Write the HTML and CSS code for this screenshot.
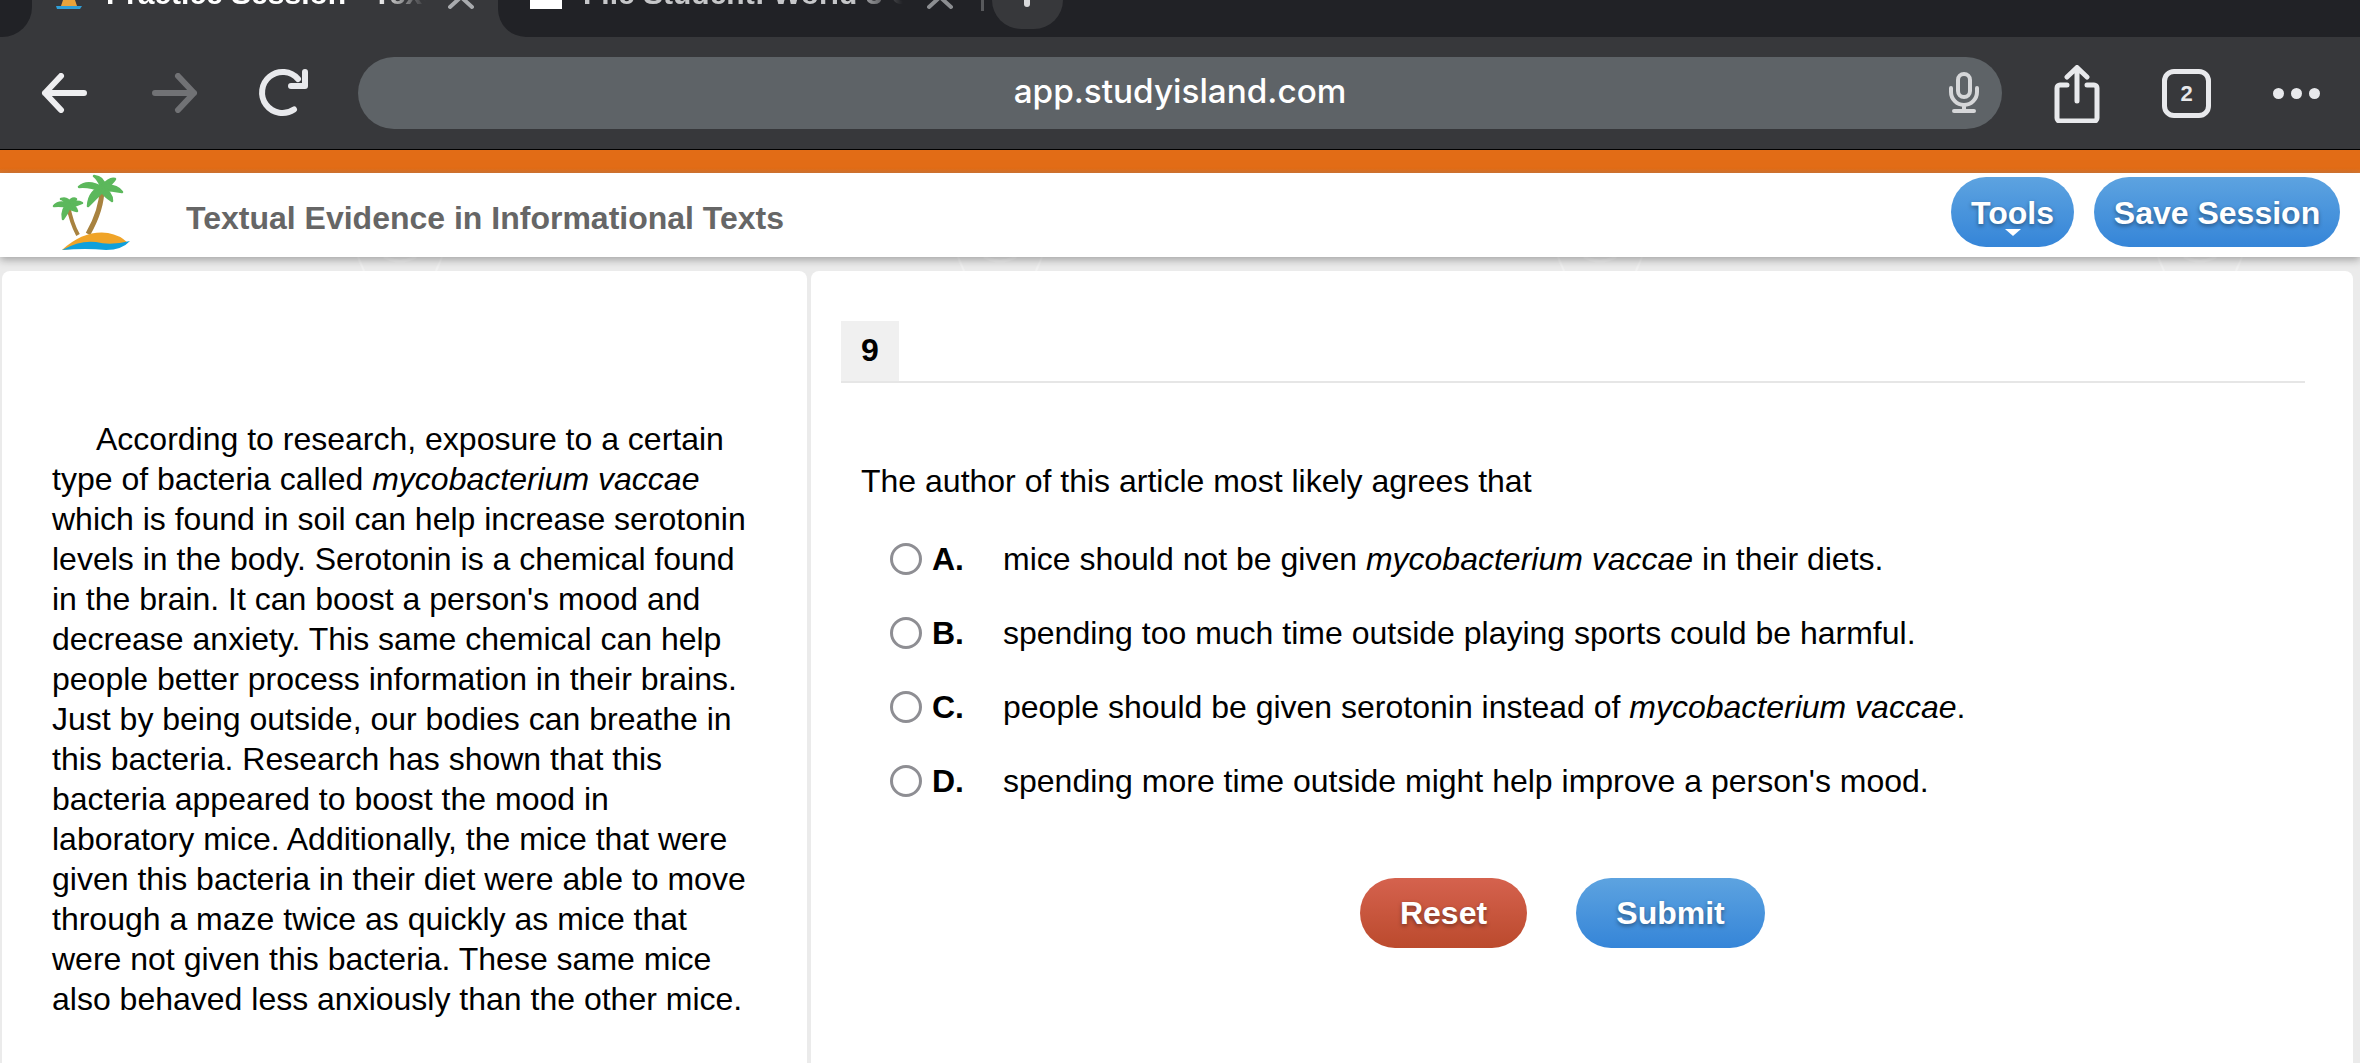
FILE: index.html
```html
<!DOCTYPE html>
<html lang="en">
<head>
    <meta charset="UTF-8">
    <title>Practice Session - Textual Evidence</title>
    <link rel="stylesheet" href="styles.css">
</head>
<body>
    <!-- Browser chrome -->
    <div class="tab-strip">
        <div class="tab-edge"></div>
        <div class="tab tab-active">
            <svg class="tab-icon" width="26" height="9" viewBox="0 0 26 9"><path d="M7 0h12l2 6H5z" fill="#e8a33a"/><path d="M0 6h26l-2 3H1z" fill="#2f9fd8"/></svg>
            <span class="tab-title">Practice Session - Textual Evidence</span>
            <svg class="tab-close" width="26" height="10" viewBox="0 0 26 10"><path d="M13 -3L2 7M13 -3L24 7" stroke="#a9abae" stroke-width="4" stroke-linecap="round" fill="none"/></svg>
        </div>
        <div class="tab tab-other">
            <span class="tab-square"></span>
            <span class="tab-title tab-title-dim">File Student: World 3 Group</span>
            <svg class="tab-close tab-close-other" width="26" height="10" viewBox="0 0 26 10"><path d="M13 -3L2 7M13 -3L24 7" stroke="#8c8e91" stroke-width="4" stroke-linecap="round" fill="none"/></svg>
            <span class="tab-sep"></span>
            <span class="tab-new"><span class="tab-plus"></span></span>
        </div>
    </div>

    <div class="toolbar">
        <svg class="tool-icon" width="46" height="40" viewBox="0 0 46 40"><path d="M20 3L4 20L20 37M4 20H43" stroke="#eeeef0" stroke-width="6" stroke-linecap="round" stroke-linejoin="round" fill="none"/></svg>
        <svg class="tool-icon tool-forward" width="46" height="40" viewBox="0 0 46 40"><path d="M26 3L42 20L26 37M42 20H3" stroke="#717275" stroke-width="6" stroke-linecap="round" stroke-linejoin="round" fill="none"/></svg>
        <svg class="tool-icon tool-reload" width="52" height="52" viewBox="0 0 52 52"><path d="M36 42.500A20.500 20.500 0 1 1 40 12" stroke="#e8e9ec" stroke-width="6" stroke-linecap="round" fill="none"/><path d="M47 5V19H33" stroke="#e8e9ec" stroke-width="6" stroke-linecap="round" stroke-linejoin="round" fill="none"/></svg>
        <div class="url-bar">
            <span class="url-text">app.studyisland.com</span>
            <svg class="url-mic" width="32" height="42" viewBox="0 0 32 42"><rect x="10" y="2" width="12" height="23" rx="6" fill="none" stroke="#d6d7d9" stroke-width="4"/><path d="M3 16v4a13 13 0 0 0 26 0v-4M16 33v6M6 39h20" fill="none" stroke="#d6d7d9" stroke-width="4" stroke-linecap="round"/></svg>
        </div>
        <svg class="tool-icon tool-share" width="46" height="58" viewBox="0 0 46 58"><path d="M13 20H6a3 3 0 0 0-3 3v30a3 3 0 0 0 3 3h34a3 3 0 0 0 3-3V23a3 3 0 0 0-3-3h-7" stroke="#e8e9ec" stroke-width="5" fill="none" stroke-linecap="round"/><path d="M23 36V3M13 12L23 2.500L33 12" stroke="#e8e9ec" stroke-width="5" fill="none" stroke-linecap="round" stroke-linejoin="round"/></svg>
        <div class="tab-count">2</div>
        <div class="more-dots"><span></span><span></span><span></span></div>
    </div>
    <div class="orange-bar"></div>

    <!-- App header -->
    <div class="app-header">
        <svg class="logo" width="84" height="78" viewBox="0 0 84 78">
            <path d="M52 14C52 30 46 46 38 60" stroke="#a8823f" stroke-width="5" fill="none"/>
            <path d="M18 31C20 42 23 52 28 61" stroke="#a8823f" stroke-width="4" fill="none"/>
            <g fill="#5cb85c" stroke="#5cb85c" stroke-width="2.500" stroke-linejoin="round">
                <path d="M52 14Q48 5 44 2Q54 3 55 13Z"/>
                <path d="M52 12Q60 3 65 5Q62 10 53 16Z"/>
                <path d="M52 12Q66 10 72 18Q62 16 52 16Z"/>
                <path d="M52 13Q62 18 62 27Q54 22 51 16Z"/>
                <path d="M53 14Q38 5 29 13Q40 12 51 17Z"/>
                <path d="M53 13Q39 16 38 32Q46 24 54 16Z"/>
                <path d="M18 31Q13 25 11 25Q18 23 20 30Z"/>
                <path d="M17 30Q22 23 26 25Q24 30 19 32Z"/>
                <path d="M17 30Q27 26 32 29Q26 32 18 33Z"/>
                <path d="M18 30Q26 32 27 37Q21 36 17 32Z"/>
                <path d="M19 30Q9 26 4 32Q10 31 18 33Z"/>
                <path d="M19 30Q11 34 13 45Q17 40 20 32Z"/>
            </g>
            <path d="M12 76Q34 56 58 59Q70 61 78 69L12 76Z" fill="#f0a428"/>
            <path d="M12 76Q30 66 46 68Q60 72 80 67Q72 76 56 76Q36 74 12 76Z" fill="#0fa0dc"/>
        </svg>
        <h1 class="app-title">Textual Evidence in Informational Texts</h1>
        <div class="header-buttons">
            <button class="btn btn-blue btn-tools">Tools<span class="caret"></span></button>
            <button class="btn btn-blue btn-save">Save Session</button>
        </div>
    </div>

    <!-- Main panels -->
    <div class="content">
        <div class="passage">
            <p>According to research, exposure to a certain type of bacteria called <em>mycobacterium vaccae</em> which is found in soil can help increase serotonin levels in the body. Serotonin is a chemical found in the brain. It can boost a person's mood and decrease anxiety. This same chemical can help people better process information in their brains. Just by being outside, our bodies can breathe in this bacteria. Research has shown that this bacteria appeared to boost the mood in laboratory mice. Additionally, the mice that were given this bacteria in their diet were able to move through a maze twice as quickly as mice that were not given this bacteria. These same mice also behaved less anxiously than the other mice.</p>
        </div>
        <div class="question">
            <div class="question-head"><span class="question-number">9</span></div>
            <p class="question-text">The author of this article most likely agrees that</p>
            <div class="choices">
                <div class="choice"><span class="radio"></span><b class="letter">A.</b><span>mice should not be given <em>mycobacterium vaccae</em> in their diets.</span></div>
                <div class="choice"><span class="radio"></span><b class="letter">B.</b><span>spending too much time outside playing sports could be harmful.</span></div>
                <div class="choice"><span class="radio"></span><b class="letter">C.</b><span>people should be given serotonin instead of <em>mycobacterium vaccae</em>.</span></div>
                <div class="choice"><span class="radio"></span><b class="letter">D.</b><span>spending more time outside might help improve a person's mood.</span></div>
            </div>
            <div class="actions">
                <button class="btn btn-red btn-reset">Reset</button>
                <button class="btn btn-blue btn-submit">Submit</button>
            </div>
        </div>
    </div>
</body>
</html>
```
FILE: styles.css
```css
html, body {
    margin: 0;
    height: 1063px;
    overflow: hidden;
}

body {
    font-family: "Liberation Sans", Arial, sans-serif;
    background-color: #ebebeb;
    /* faint palm pattern of the page background, shows only in the strip under the header */
    background-image: url("data:image/svg+xml,%3Csvg xmlns='http://www.w3.org/2000/svg' width='600' height='14'%3E%3Cpath d='M358 0l6 14M442 0l-6 14' stroke='%23f1f1f1' stroke-width='2' fill='none'/%3E%3Cpath d='M384 0q16 8 32 0' stroke='%23f1f1f1' stroke-width='3' fill='none'/%3E%3C/svg%3E");
    background-repeat: repeat-x;
    background-position: 0 257px;
    color: #000;
}

/* Browser chrome */
.tab-strip {
    display: flex;
    height: 37px;
    background: #37383b;
    overflow: hidden;
}

.tab-edge {
    width: 32px;
    background: #212226;
    border-bottom-right-radius: 30px;
}

.tab {
    display: flex;
    align-items: flex-start;
    height: 37px;
    color: #fff;
    font-size: 30px;
    font-weight: bold;
    box-sizing: border-box;
}

.tab-active {
    width: 466px;
    padding-left: 24px;
}

.tab-other {
    flex: 1;
    background: #212226;
    border-bottom-left-radius: 28px;
    padding-left: 32px;
}

.tab-icon {
    flex: none;
    margin-right: 24px;
}

.tab-title {
    display: block;
    flex: none;
    width: 320px;
    line-height: 34px;
    margin-top: -23px;
    white-space: nowrap;
    overflow: hidden;
    -webkit-mask-image: linear-gradient(to right, #000 84%, transparent);
    mask-image: linear-gradient(to right, #000 84%, transparent);
}

.tab-title-dim {
    color: #c6c7c9;
}

.tab-close {
    flex: none;
    margin-left: 22px;
}

.tab-close-other {
    margin-left: 24px;
}

.tab-square {
    flex: none;
    width: 32px;
    height: 9px;
    background: #fff;
    margin-right: 21px;
}

.tab-sep {
    width: 3px;
    height: 11px;
    background: #58595c;
    margin-left: 28px;
}

.tab-new {
    position: relative;
    width: 71px;
    height: 29px;
    margin-left: 8px;
    background: #37383b;
    border-radius: 0 0 35px 35px;
}

.tab-plus {
    position: absolute;
    left: 32px;
    top: 0;
    width: 6px;
    height: 7px;
    border-radius: 0 0 3px 3px;
    background: #d8d9db;
}

.toolbar {
    display: flex;
    align-items: center;
    height: 112px;
    background: #37383b;
    border-bottom: 1px solid #000;
    padding-left: 41px;
}

.tool-icon {
    flex: none;
}

.tool-forward {
    margin-left: 65px;
}

.tool-reload {
    margin-left: 60px;
    margin-right: 48px;
}

.url-bar {
    position: relative;
    width: 1644px;
    height: 72px;
    flex: none;
    border-radius: 36px;
    background: #5e6367;
    text-align: center;
    line-height: 68px;
}

.url-text {
    color: #fff;
    font-size: 33.3px;
    font-family: Inter, "Liberation Sans", sans-serif;
    font-weight: 500;
}

.url-mic {
    position: absolute;
    right: 22px;
    top: 15px;
}

.tool-share {
    margin-left: 52px;
    margin-top: 2px;
}

.tab-count {
    width: 49px;
    height: 49px;
    margin-left: 62px;
    box-sizing: border-box;
    border: 5px solid #e8e9ec;
    border-radius: 12px;
    color: #e8e9ec;
    font-size: 22px;
    font-weight: bold;
    line-height: 40px;
    text-align: center;
}

.more-dots {
    display: flex;
    gap: 7px;
    margin-left: 62px;
}

.more-dots span {
    width: 11px;
    height: 11px;
    border-radius: 50%;
    background: #e8e9ec;
}

.orange-bar {
    height: 23px;
    background: linear-gradient(#e26c16 80%, #d87a35);
}

/* App header */
.app-header {
    display: flex;
    align-items: center;
    height: 84px;
    background: #fff;
    box-shadow: 0 3px 8px rgba(0, 0, 0, 0.3);
    position: relative;
    padding-left: 50px;
    padding-right: 20px;
}

.logo {
    flex: none;
    margin-top: -4px;
}

.app-title {
    margin: 6px 0 0 52px;
    flex: 1;
    color: #666;
    font-size: 32px;
    font-weight: bold;
}

.header-buttons {
    display: flex;
    gap: 20px;
    margin-top: -6px;
}

.btn {
    position: relative;
    height: 70px;
    border: none;
    border-radius: 35px;
    color: #fff;
    font-family: inherit;
    font-size: 32px;
    font-weight: bold;
    padding: 0;
    text-shadow: 0 2px 4px rgba(0, 0, 0, 0.4);
}

.btn-blue {
    background: linear-gradient(#5da3e0, #3585d8);
}

.btn-red {
    background: linear-gradient(#d5624e, #bb4a2d);
}

.btn-tools {
    width: 123px;
    padding-top: 3px;
}

.btn-save {
    width: 246px;
    padding-top: 2px;
}

.btn-reset {
    width: 167px;
}

.btn-submit {
    width: 189px;
}

.caret {
    position: absolute;
    left: 50%;
    bottom: 11px;
    margin-left: -8px;
    border-left: 8px solid transparent;
    border-right: 8px solid transparent;
    border-top: 7px solid #fff;
}

/* Main panels */
.content {
    display: flex;
    gap: 4px;
    margin-top: 14px;
    padding-left: 2px;
}

.passage {
    width: 805px;
    height: 792px;
    flex: none;
    box-sizing: border-box;
    background: #fff;
    border-radius: 8px 8px 0 0;
    padding: 148px 52px 0 50px;
    font-size: 32px;
    line-height: 40px;
}

.passage p {
    margin: 0;
    text-indent: 44px;
}

.question {
    width: 1542px;
    height: 792px;
    box-sizing: border-box;
    background: #fff;
    border-radius: 8px 8px 0 0;
    padding: 50px 0 0 30px;
    font-size: 32px;
}

.question-head {
    width: 1464px;
    height: 60px;
    border-bottom: 2px solid #e6e6e6;
}

.question-number {
    display: block;
    width: 58px;
    height: 60px;
    background: #f0f0f0;
    font-weight: bold;
    line-height: 58px;
    text-align: center;
}

.question-text {
    margin: 78px 0 0 20px;
    line-height: 40px;
}

.choices {
    margin: 21px 0 0 49px;
}

.choice {
    display: flex;
    align-items: center;
    height: 74px;
}

.radio {
    width: 32px;
    height: 32px;
    flex: none;
    border: 3px solid #8e8e93;
    border-radius: 50%;
    box-sizing: border-box;
    margin-right: 10px;
}

.letter {
    width: 71px;
    flex: none;
}

.actions {
    display: flex;
    gap: 49px;
    margin: 60px 0 0 519px;
}
```
